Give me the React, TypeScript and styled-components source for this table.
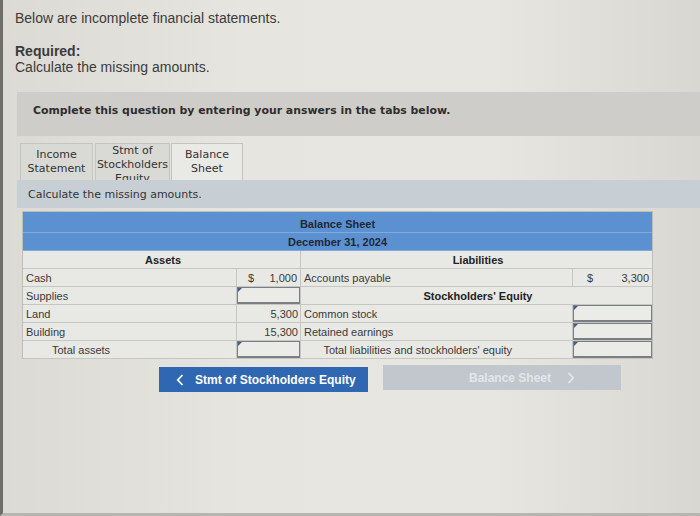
import React from 'react';
import styled, { createGlobalStyle } from 'styled-components';

const Global = createGlobalStyle`
  html, body { margin: 0; padding: 0; }
  body {
    width: 700px; height: 516px; overflow: hidden;
    background: #e2e1dc;
    font-family: "Liberation Sans", Arial, sans-serif;
  }
`;

const Page = styled.div`
  width: 700px; height: 516px; box-sizing: border-box;
  border-left: 3px solid #6f6e6a;
  border-bottom: 3px solid #b6b5b0;
  background: linear-gradient(90deg, #dbdad4 0%, #e6e5e0 35%, #e7e6e1 70%, #d8d7d1 100%);
  padding-top: 10px;
`;

const Intro = styled.div`
  padding-left: 12px;
  color: #3b3b3b;
  font-size: 14px;
  line-height: 16px;
`;

const Para = styled.p<{ $gap?: number; $bold?: boolean }>`
  margin: ${p => p.$gap ?? 0}px 0 0 0;
  font-weight: ${p => (p.$bold ? 'bold' : 'normal')};
`;

const Banner = styled.div`
  margin: 17px 0 0 14px;
  height: 44px; box-sizing: border-box;
  padding: 12px 0 0 16px;
  background: #cecdca;
  font-family: "DejaVu Sans", Verdana, sans-serif;
  font-weight: bold; font-size: 10.9px; color: #2e2e2e;
`;

const Tabs = styled.div`
  display: flex; align-items: flex-end;
  margin: 7px 0 0 17px;
`;

const Tab = styled.div<{ $w: number; $active?: boolean; $ml?: number }>`
  width: ${p => p.$w}px; height: 37px; box-sizing: border-box;
  margin-left: ${p => p.$ml ?? 0}px;
  display: flex; align-items: center; justify-content: center;
  overflow: hidden;
  background: ${p => (p.$active ? '#e9e9e6' : '#d9d9d6')};
  border: 1px solid #c4c4c1; border-bottom: none;
  font-family: "DejaVu Sans", Verdana, sans-serif;
  font-size: 11px; line-height: 14px; color: #333;
  text-align: center;
`;

const TabText = styled.div<{ $shift?: number }>`
  margin-top: ${p => p.$shift ?? 0}px;
`;

const Panel = styled.div`
  margin-left: 14px;
  height: 28px; box-sizing: border-box;
  padding: 8px 0 0 11px;
  background: #c7cfd5;
  font-family: "DejaVu Sans", Verdana, sans-serif;
  font-size: 11px; color: #333;
`;

const Sheet = styled.div`
  margin: 3px 0 0 19px;
  width: 629px;
  border: 1px solid #bdbdb9;
  border-bottom: none;
  font-size: 11px; color: #333;
`;

const HeadRow = styled.div<{ $h: number; $pt?: number }>`
  height: ${p => p.$h}px; box-sizing: border-box;
  padding-top: ${p => p.$pt ?? 0}px;
  background: #5c91d1;
  border-bottom: 1px solid #83a8da;
  display: flex; align-items: center; justify-content: center;
  font-weight: bold; color: #1f2836;
`;

const Grid = styled.div`
  display: grid;
  grid-template-columns: 214px 64px 272px 79px;
  grid-auto-rows: 18px;
  background: #e8e8e5;
`;

const Cell = styled.div<{ $span?: number; $align?: string; $bold?: boolean; $pl?: number; $pr?: number; $last?: boolean }>`
  grid-column: span ${p => p.$span ?? 1};
  box-sizing: border-box;
  display: flex; align-items: center;
  justify-content: ${p => p.$align ?? 'flex-start'};
  padding: 0 ${p => p.$pr ?? 0}px 0 ${p => p.$pl ?? 3}px;
  border-bottom: 1px solid #c6c6c2;
  border-right: ${p => (p.$last ? 'none' : '1px solid #c6c6c2')};
  font-weight: ${p => (p.$bold ? 'bold' : 'normal')};
  color: ${p => (p.$bold ? '#222' : '#3a3a3a')};
  white-space: nowrap;
`;

const Money = styled(Cell)<{ $dl?: number }>`
  justify-content: space-between;
  padding: 0 3px 0 ${p => p.$dl ?? 11}px;
`;

const InputCell = styled.div<{ $last?: boolean }>`
  box-sizing: border-box;
  border-right: ${p => (p.$last ? 'none' : '1px solid #c6c6c2')};
  border-bottom: 1px solid #c6c6c2;
  display: flex;
`;

const InputBox = styled.div`
  position: relative;
  flex: 1;
  box-sizing: border-box;
  border: 1px solid #7a7f84;
  border-bottom-width: 2px;
  background: #ebebe8;
  &::before {
    content: '';
    position: absolute; left: 0; top: 0;
    border-top: 4px solid #3d5f92;
    border-right: 4px solid transparent;
  }
`;

const Buttons = styled.div`
  display: flex; align-items: flex-start;
  margin: 6px 0 0 156px;
`;

const PrevButton = styled.div`
  margin-top: 2px;
  width: 209px; height: 25px; box-sizing: border-box;
  background: #2f67b3;
  color: #fff; font-weight: bold; font-size: 12px;
  display: flex; align-items: center;
  padding-left: 17px; gap: 11px;
`;

const NextButton = styled.div`
  margin-left: 15px;
  width: 238px; height: 25px; box-sizing: border-box;
  background: #c1c7cd;
  color: #e3e6e9; font-weight: bold; font-size: 12px;
  display: flex; align-items: center; justify-content: center;
  padding-left: 40px; gap: 16px;
`;

const Chevron = ({ dir }: { dir: 'left' | 'right' }) => (
  <svg width="8" height="12" viewBox="0 0 8 12">
    <path
      d={dir === 'left' ? 'M6.5 1 L1.8 6 L6.5 11' : 'M1.5 1 L6.2 6 L1.5 11'}
      fill="none"
      stroke="currentColor"
      strokeWidth="1.8"
    />
  </svg>
);

export default function App() {
  return (
    <>
      <Global />
      <Page>
        <Intro>
          <Para>Below are incomplete financial statements.</Para>
          <Para $gap={17} $bold>Required:</Para>
          <Para>Calculate the missing amounts.</Para>
        </Intro>
        <Banner>Complete this question by entering your answers in the tabs below.</Banner>
        <Tabs>
          <Tab $w={73}>
            <TabText>Income<br />Statement</TabText>
          </Tab>
          <Tab $w={75} $ml={2}>
            <TabText $shift={5}>Stmt of<br />Stockholders<br />Equity</TabText>
          </Tab>
          <Tab $w={72} $ml={1} $active>
            <TabText>Balance<br />Sheet</TabText>
          </Tab>
        </Tabs>
        <Panel>Calculate the missing amounts.</Panel>
        <Sheet>
          <HeadRow $h={21} $pt={4}>Balance Sheet</HeadRow>
          <HeadRow $h={18}>December 31, 2024</HeadRow>
          <Grid>
            <Cell $span={2} $align="center" $bold>Assets</Cell>
            <Cell $span={2} $align="center" $bold $last>Liabilities</Cell>

            <Cell>Cash</Cell>
            <Money><span>$</span><span>1,000</span></Money>
            <Cell>Accounts payable</Cell>
            <Money $dl={14} $last><span>$</span><span>3,300</span></Money>

            <Cell>Supplies</Cell>
            <InputCell><InputBox /></InputCell>
            <Cell $span={2} $align="center" $bold $last>Stockholders' Equity</Cell>

            <Cell>Land</Cell>
            <Cell $align="flex-end" $pr={2}>5,300</Cell>
            <Cell>Common stock</Cell>
            <InputCell $last><InputBox /></InputCell>

            <Cell>Building</Cell>
            <Cell $align="flex-end" $pr={2}>15,300</Cell>
            <Cell>Retained earnings</Cell>
            <InputCell $last><InputBox /></InputCell>

            <Cell $pl={29}>Total assets</Cell>
            <InputCell><InputBox /></InputCell>
            <Cell $align="flex-end" $pr={60}>Total liabilities and stockholders' equity</Cell>
            <InputCell $last><InputBox /></InputCell>
          </Grid>
        </Sheet>
        <Buttons>
          <PrevButton>
            <Chevron dir="left" />
            <span>Stmt of Stockholders Equity</span>
          </PrevButton>
          <NextButton>
            <span>Balance Sheet</span>
            <Chevron dir="right" />
          </NextButton>
        </Buttons>
      </Page>
    </>
  );
}
